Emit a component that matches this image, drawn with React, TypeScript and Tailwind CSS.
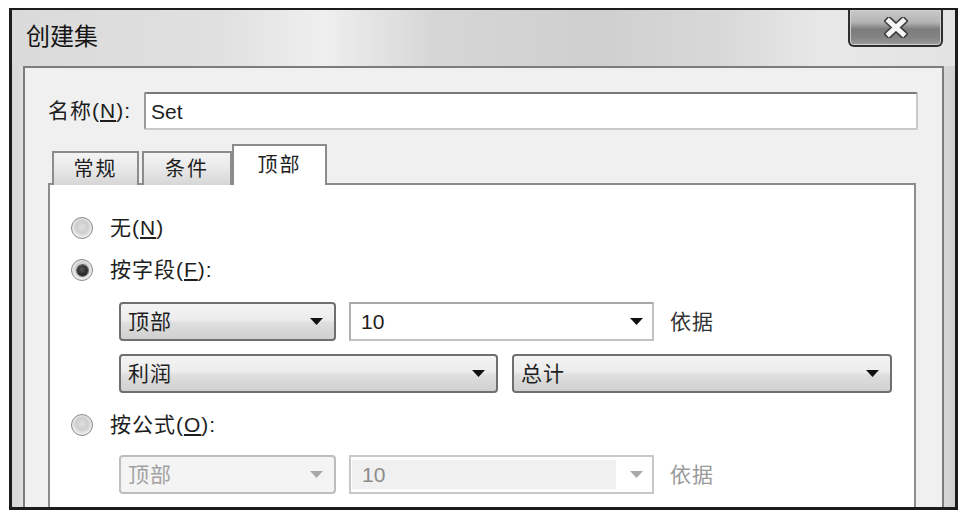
import React from "react";

function Arrow({ color = "#111" }: { color?: string }) {
  return (
    <svg width="13" height="7" viewBox="0 0 13 7" className="shrink-0">
      <path d="M0 0 L13 0 L6.5 7 Z" fill={color} />
    </svg>
  );
}

function Radio({ checked = false }: { checked?: boolean }) {
  return (
    <div className="w-[22px] h-[22px] shrink-0 rounded-full border border-[#8a8a8a] bg-[radial-gradient(circle_at_50%_45%,#e0e0e0_0%,#cdcdcd_40%,#ebebeb_65%,#f8f8f8_100%)] flex items-center justify-center">
      {checked && (
        <div className="w-[11px] h-[11px] rounded-full bg-[radial-gradient(circle_at_45%_40%,#5a5a5a_0%,#262626_60%,#1a1a1a_100%)] shadow-[0_0_0_1px_#6a6a6a]" />
      )}
    </div>
  );
}

function DropCombo({ text, w, disabled = false }: { text: string; w: string; disabled?: boolean }) {
  return (
    <div
      className={
        "h-[39px] rounded-[4px] border-2 flex items-center pl-[7px] justify-between pr-[11px] " +
        w +
        (disabled
          ? " border-[#bdbdbd] bg-[#f4f4f4] text-[#a2a2a2]"
          : " border-[#6f6f6f] bg-[linear-gradient(180deg,#f4f4f4_0%,#ececec_45%,#dedede_55%,#d0d0d0_100%)] text-[#1e1e1e]")
      }
    >
      <span className="leading-none tracking-[1px]">{text}</span>
      <Arrow color={disabled ? "#a8a8a8" : "#111"} />
    </div>
  );
}

function EditCombo({ text, disabled = false }: { text: string; disabled?: boolean }) {
  return (
    <div
      className={
        "w-[305px] h-[39px] border-2 flex items-center justify-between pr-[9px] " +
        (disabled ? "border-[#c8c8c8] bg-white" : "border-[#c2c2c2] border-t-[#a8a8a8] border-l-[#b0b0b0] bg-white")
      }
    >
      <div className={"h-[29px] flex items-center pl-[10px] " + (disabled ? "w-[264px] ml-[1px] bg-[#f0f0f0] text-[#8c8c8c]" : "text-[#1e1e1e]")}>
        <span className="leading-none">{text}</span>
      </div>
      <Arrow color={disabled ? "#a8a8a8" : "#111"} />
    </div>
  );
}

export default function App() {
  return (
    <div className="w-[967px] h-[517px] bg-white pt-[8px] pl-[9px] overflow-hidden font-['Liberation_Sans','Noto_Sans_CJK_SC',sans-serif] text-[21px] text-[#1e1e1e]">
      <div className="w-[949px] h-[502px] border-t-2 border-x-[3px] border-b-[3px] border-[#1c1c1c] bg-[linear-gradient(90deg,#d6d6d6_0%,#e6e6e6_2%,#dadada_50%,#e2e2e2_97%,#d0d0d0_100%)] flex flex-col">
        {/* title bar */}
        <div className="h-[56px] shrink-0 flex items-start justify-between pl-[14px] pr-[12px] bg-[linear-gradient(90deg,#dadada_0%,#e0e0e0_22%,#efefef_33%,#d6d6d6_45%,#cfcfcf_62%,#d8d8d8_75%,#e8e8e8_86%,#e3e3e3_100%)]">
          <div className="self-center text-[24px] pb-[2px] text-[#151515]">创建集</div>
          <div className="w-[95px] h-[37px] rounded-b-[6px] border-2 border-t-0 border-[#2e2e2e] bg-[linear-gradient(180deg,#c9c9c9_0%,#b4b4b4_35%,#7c7c7c_55%,#858585_80%,#9c9c9c_100%)] shadow-[inset_0_0_0_1px_#d0d0d0] flex items-center justify-center">
            <svg width="24" height="21" viewBox="0 0 24 21">
              <path d="M5 4 L19 17 M19 4 L5 17" stroke="#3a3a3a" strokeWidth="8" strokeLinecap="square" />
              <path d="M5 4 L19 17 M19 4 L5 17" stroke="#f6f6f6" strokeWidth="5" strokeLinecap="square" />
            </svg>
          </div>
        </div>
        {/* client */}
        <div className="flex-1 mx-[11px] border-2 border-b-0 border-[#7c7c7c] bg-[#f0f0f0] pt-[24px] pl-[23px] pr-[24px] flex flex-col overflow-hidden">
          <div className="h-[38px] flex items-center shrink-0">
            <div className="w-[96px] shrink-0 tracking-[1px]">
              名称(<span className="underline">N</span>):
            </div>
            <div className="flex-1 h-[38px] rounded-[2px] border-2 border-[#c9c9c9] border-t-[#7a7a7a] border-l-[#9a9a9a] bg-white flex items-center pl-[5px]">
              <span className="leading-none">Set</span>
            </div>
          </div>
          {/* tabs */}
          <div className="mt-[14px] h-[41px] -mb-[2px] flex items-end shrink-0 relative z-10">
            <div className="ml-[4px] w-[87px] h-[34px] border-2 border-b-0 border-[#8c8c8c] bg-[linear-gradient(180deg,#f4f4f4_0%,#e8e8e8_50%,#d6d6d6_100%)] flex items-center justify-center tracking-[2px] text-[20px]">
              常规
            </div>
            <div className="ml-[3px] w-[90px] h-[34px] border-2 border-b-0 border-[#8c8c8c] bg-[linear-gradient(180deg,#f4f4f4_0%,#e8e8e8_50%,#d6d6d6_100%)] flex items-center justify-center tracking-[2px] text-[20px]">
              条件
            </div>
            <div className="w-[95px] h-[41px] border-2 border-b-0 border-[#8c8c8c] bg-white flex items-center justify-center pb-[2px] tracking-[2px] text-[20px]">
              顶部
            </div>
          </div>
          {/* panel */}
          <div className="flex-1 mr-[2px] border-2 border-b-0 border-[#8c8c8c] bg-white pl-[21px] flex flex-col">
            <div className="mt-[28px] h-[30px] flex items-center gap-[17px]">
              <Radio />
              <span className="tracking-[1px]">
                无(<span className="underline">N</span>)
              </span>
            </div>
            <div className="mt-[12px] h-[30px] flex items-center gap-[17px]">
              <Radio checked />
              <span className="tracking-[1px]">
                按字段(<span className="underline">F</span>):
              </span>
            </div>
            <div className="mt-[17px] pl-[48px] flex items-center">
              <DropCombo text="顶部" w="w-[217px]" />
              <div className="ml-[13px]">
                <EditCombo text="10" />
              </div>
              <span className="ml-[16px] text-[#333] tracking-[1px]">依据</span>
            </div>
            <div className="mt-[13px] pl-[48px] flex items-center">
              <DropCombo text="利润" w="w-[379px]" />
              <div className="ml-[14px]">
                <DropCombo text="总计" w="w-[380px]" />
              </div>
            </div>
            <div className="mt-[17px] h-[30px] flex items-center gap-[17px]">
              <Radio />
              <span className="tracking-[1px]">
                按公式(<span className="underline">O</span>):
              </span>
            </div>
            <div className="mt-[15px] pl-[48px] flex items-center">
              <DropCombo text="顶部" w="w-[217px]" disabled />
              <div className="ml-[13px]">
                <EditCombo text="10" disabled />
              </div>
              <span className="ml-[16px] text-[#9a9a9a] tracking-[1px]">依据</span>
            </div>
          </div>
        </div>
      </div>
    </div>
  );
}
